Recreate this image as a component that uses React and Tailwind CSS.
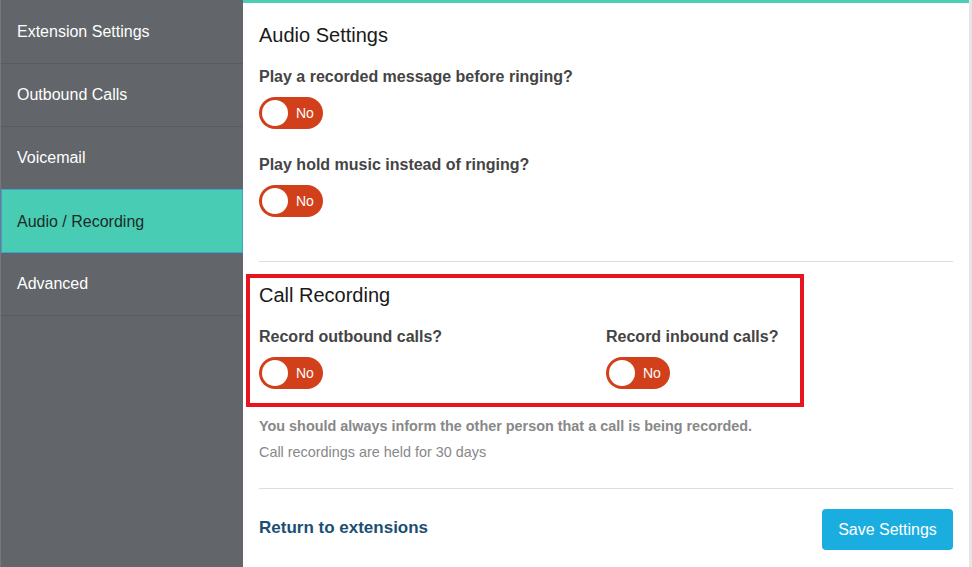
import React from "react";

const navItems = ["Extension Settings", "Outbound Calls", "Voicemail", "Audio / Recording", "Advanced"];

function Toggle() {
  return (
    <div className="mt-[10px] flex h-[32px] w-[64px] items-center rounded-full bg-[#d2401b] px-[3px]">
      <div className="h-[26px] w-[26px] rounded-full bg-white" />
      <span className="ml-[8px] text-[14px] text-white">No</span>
    </div>
  );
}

export default function App() {
  return (
    <div
      className="flex h-[567px] w-[972px] overflow-hidden bg-white"
      style={{ fontFamily: '"Liberation Sans", Arial, sans-serif' }}
    >
      {/* Sidebar */}
      <div className="w-[243px] shrink-0 border-l border-[#75787c] bg-[#626569] pt-[1px]">
        {navItems.map((item) => {
          const active = item === "Audio / Recording";
          return (
            <div
              key={item}
              className={
                active
                  ? "-mt-[1px] flex h-[64px] items-center border border-[#3f9fd6] bg-[#48cdb4] pl-[15px] pt-[1px] text-[16px] text-[#1c2b28]"
                  : "flex h-[63px] items-center border-b border-[#585b5f] pl-[16px] text-[16px] text-white"
              }
            >
              {item}
            </div>
          );
        })}
      </div>

      {/* Main */}
      <div className="flex-1 border-t-[3px] border-[#4ecdb5] px-[16px] pt-[20px]">
        <h2 className="text-[20px] leading-[24px] text-[#1a1a1a]">Audio Settings</h2>

        <div className="mt-[20px] text-[16px] font-bold leading-[20px] text-[#444]">
          Play a recorded message before ringing?
        </div>
        <Toggle />

        <div className="mt-[26px] text-[16px] font-bold leading-[20px] text-[#444]">
          Play hold music instead of ringing?
        </div>
        <Toggle />

        <div className="mt-[44px] border-t border-[#dedede]" />

        <div className="-ml-[13px] mt-[12px] w-[558px] border-4 border-[#e8141f] pb-[14px] pl-[9px] pt-[5px]">
          <h2 className="text-[20px] leading-[24px] text-[#1a1a1a]">Call Recording</h2>
          <div className="mt-[20px] grid grid-cols-[347px_1fr]">
            <div>
              <div className="text-[16px] font-bold leading-[20px] text-[#444]">Record outbound calls?</div>
              <Toggle />
            </div>
            <div>
              <div className="text-[16px] font-bold leading-[20px] text-[#444]">Record inbound calls?</div>
              <Toggle />
            </div>
          </div>
        </div>

        <p className="mt-[9px] text-[14.4px] font-bold leading-[20px] text-[#888]">
          You should always inform the other person that a call is being recorded.
        </p>
        <p className="mt-[6px] text-[14.4px] leading-[20px] text-[#888]">Call recordings are held for 30 days</p>

        <div className="mt-[26px] border-t border-[#dedede]" />

        <div className="mt-[20px] flex items-center justify-between">
          <a className="mt-[-4px] text-[17px] font-bold text-[#1b4f72]">Return to extensions</a>
          <button className="h-[41px] w-[131px] rounded-[4px] bg-[#1aade0] text-[16px] text-white">
            Save Settings
          </button>
        </div>
      </div>

      <div className="w-[3px] shrink-0 bg-[#e6e6e6]" />
    </div>
  );
}
